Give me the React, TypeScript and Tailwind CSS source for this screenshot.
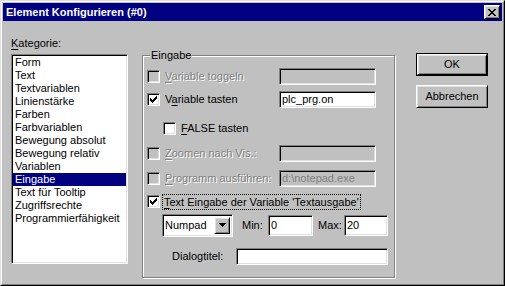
import React from "react";

const sunken =
  "border border-t-[#808080] border-l-[#808080] border-r-white border-b-white shadow-[inset_1px_1px_0_#000,inset_-1px_-1px_0_#dfdfdf]";
const raised =
  "border border-t-white border-l-white border-r-black border-b-black shadow-[inset_1px_1px_0_#dfdfdf,inset_-1px_-1px_0_#808080]";
const disabledText = "text-[#808080] [text-shadow:1px_1px_0_#fff]";

function Check({ checked, disabled }: { checked?: boolean; disabled?: boolean }) {
  return (
    <div
      className={`w-[13px] h-[13px] shrink-0 flex items-center justify-center ${sunken} ${
        disabled ? "bg-[#c0c0c0]" : "bg-white"
      }`}
    >
      {checked && (
        <svg width="7" height="7" viewBox="0 0 7 7" shapeRendering="crispEdges">
          <path d="M6 0h1v3h-1zM5 1h1v3h-1zM4 2h1v3h-1zM3 3h1v3h-1zM2 4h1v3h-1zM1 3h1v3h-1zM0 2h1v3h-1z" fill="#000" />
        </svg>
      )}
    </div>
  );
}

function Field({
  w,
  h,
  text,
  disabled,
}: {
  w: string;
  h: string;
  text?: string;
  disabled?: boolean;
}) {
  return (
    <div
      className={`${w} ${h} ${sunken} ${disabled ? "bg-[#c0c0c0] text-[#808080]" : "bg-white text-black"} flex items-center pl-[2px] shrink-0`}
    >
      {text}
    </div>
  );
}

function U({ children }: { children: React.ReactNode }) {
  return <span className="underline underline-offset-[2px]">{children}</span>;
}

const items = [
  "Form",
  "Text",
  "Textvariablen",
  "Linienstärke",
  "Farben",
  "Farbvariablen",
  "Bewegung absolut",
  "Bewegung relativ",
  "Variablen",
  "Eingabe",
  "Text für Tooltip",
  "Zugriffsrechte",
  "Programmierfähigkeit",
];

export default function App() {
  return (
    <div className="w-[505px] h-[286px] bg-[#c0c0c0] font-['Liberation_Sans',Arial,sans-serif] text-[11px] leading-[13px] text-black">
      <div className="w-full h-full border border-t-[#dfdfdf] border-l-[#dfdfdf] border-r-black border-b-black">
        <div className="w-full h-full border border-t-white border-l-white border-r-[#808080] border-b-[#808080] p-px flex flex-col">
          {/* Title bar */}
          <div className="h-[18px] bg-[#000080] flex items-center pl-[3px] pr-[2px] shrink-0">
            <span className="flex-1 text-white font-bold text-[11px]">Element Konfigurieren (#0)</span>
            <div className={`w-[16px] h-[14px] bg-[#c0c0c0] flex items-center justify-center ${raised}`}>
              <svg width="8" height="7" viewBox="0 0 8 7" shapeRendering="crispEdges">
                <path
                  d="M0 0h2v1h-2zM6 0h2v1h-2zM1 1h2v1h-2zM5 1h2v1h-2zM2 2h4v1h-4zM3 3h2v1h-2zM2 4h4v1h-4zM1 5h2v1h-2zM5 5h2v1h-2zM0 6h2v1h-2zM6 6h2v1h-2z"
                  fill="#000"
                />
              </svg>
            </div>
          </div>

          {/* Body */}
          <div className="flex flex-1">
            {/* Kategorie */}
            <div className="ml-[8px] w-[117px] flex flex-col shrink-0">
              <div className="mt-[16px] h-[13px]">
                <U>K</U>ategorie:
              </div>
              <div className={`mt-[4px] h-[210px] bg-white ${sunken} p-px`}>
                {items.map((it) => (
                  <div
                    key={it}
                    className={`h-[13px] leading-[13px] pl-[2px] whitespace-nowrap ${
                      it === "Eingabe" ? "bg-[#000080] text-white" : ""
                    }`}
                  >
                    {it}
                  </div>
                ))}
              </div>
            </div>

            {/* Groupbox */}
            <div className="ml-[14px] mt-[34px] w-[253px] h-[223px] relative border border-[#808080] shadow-[1px_1px_0_#fff,inset_1px_1px_0_#fff] shrink-0 pl-[4px] flex flex-col">
              <span className="absolute left-[7px] top-[-7px] bg-[#c0c0c0] px-px leading-[13px]">Eingabe</span>

              <div className="flex items-center h-[17px] mt-[12px]">
                <div className="w-[132px] flex items-center gap-[5px]">
                  <Check disabled />
                  <span className={disabledText}>
                    <U>V</U>ariable toggeln
                  </span>
                </div>
                <Field w="w-[97px]" h="h-[17px]" disabled />
              </div>

              <div className="flex items-center h-[17px] mt-[6px]">
                <div className="w-[132px] flex items-center gap-[5px]">
                  <Check checked />
                  <span>
                    V<U>a</U>riable tasten
                  </span>
                </div>
                <Field w="w-[97px]" h="h-[17px]" text="plc_prg.on" />
              </div>

              <div className="flex items-center h-[17px] mt-[12px] ml-[16px] gap-[5px]">
                <Check />
                <span>
                  <U>F</U>ALSE tasten
                </span>
              </div>

              <div className="flex items-center h-[17px] mt-[8px]">
                <div className="w-[132px] flex items-center gap-[5px]">
                  <Check disabled />
                  <span className={disabledText}>
                    <U>Z</U>oomen nach Vis.:
                  </span>
                </div>
                <Field w="w-[97px]" h="h-[17px]" disabled />
              </div>

              <div className="flex items-center h-[17px] mt-[8px]">
                <div className="w-[132px] flex items-center gap-[5px]">
                  <Check disabled />
                  <span className={disabledText}>
                    <U>P</U>rogramm ausführen:
                  </span>
                </div>
                <Field w="w-[97px]" h="h-[17px]" text="d:\notepad.exe" disabled />
              </div>

              <div className="flex items-center h-[17px] mt-[6px] gap-[3px]">
                <Check checked />
                <span className="outline outline-1 outline-dotted outline-black px-[1px] leading-[14px]">
                  <U>T</U>ext Eingabe der Variable 'Textausgabe'
                </span>
              </div>

              <div className="flex items-center h-[24px] mt-[3px] ml-[15px]">
                <div className={`w-[71px] h-[23px] bg-white ${sunken} flex items-center p-[2px] pl-[2px]`}>
                  <span className="flex-1">Numpad</span>
                  <div className={`w-[16px] h-full bg-[#c0c0c0] flex items-center justify-center ${raised}`}>
                    <svg width="7" height="4" viewBox="0 0 7 4" shapeRendering="crispEdges">
                      <path d="M0 0h7v1h-7zM1 1h5v1h-5zM2 2h3v1h-3zM3 3h1v1h-1z" fill="#000" />
                    </svg>
                  </div>
                </div>
                <span className="ml-[9px] w-[26px]">Min:</span>
                <Field w="w-[45px]" h="h-[21px]" text="0" />
                <span className="ml-[5px] w-[26px]">Max:</span>
                <Field w="w-[44px]" h="h-[21px]" text="20" />
              </div>

              <div className="flex items-center h-[17px] mt-[11px] ml-[25px]">
                <span className="w-[64px]">Dialogtitel:</span>
                <Field w="w-[152px]" h="h-[17px]" />
              </div>
            </div>

            {/* Buttons */}
            <div className="ml-[21px] mt-[32px] w-[72px] flex flex-col shrink-0">
              <div className="h-[23px] border border-black">
                <div className={`w-full h-full ${raised} flex items-center justify-center`}>OK</div>
              </div>
              <div className={`mt-[9px] h-[23px] ${raised} flex items-center justify-center`}>Abbrechen</div>
            </div>
          </div>
        </div>
      </div>
    </div>
  );
}
